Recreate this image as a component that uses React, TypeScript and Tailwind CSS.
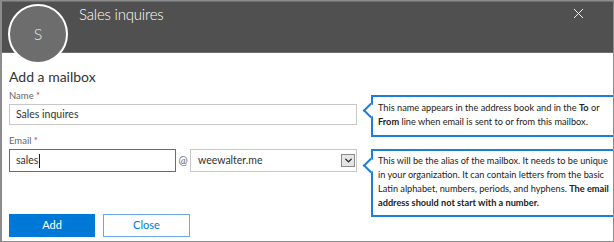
import { ChevronDown, X } from "lucide-react";

const font = { fontFamily: 'Lato, "Open Sans", Arial, sans-serif' };

function Callout({ className, arrowTop, children }: { className: string; arrowTop: string; children: React.ReactNode }) {
  return (
    <div className={`relative border-2 border-[#1b7fd8] bg-white ${className}`}>
      {/* left pointer */}
      <span
        className={`absolute -left-[8px] ${arrowTop} h-[11px] w-[11px] rotate-45 border-b-2 border-l-2 border-[#1b7fd8] bg-white`}
      />
      <div className="relative whitespace-nowrap text-[9.2px] leading-[14px] text-[#222]">{children}</div>
    </div>
  );
}

export default function App() {
  return (
    <div
      className="relative h-[242px] w-[614px] overflow-hidden border border-l-2 border-[#8c8c8c] bg-white"
      style={font}
    >
      {/* Header */}
      <div className="flex h-[52px] items-start justify-between border-t border-b border-[#6f6f6f] bg-[#505050] pl-[77px] pr-[26px]">
        <h1 className="mt-[2px] text-[15px] font-light leading-[20px] tracking-[-0.2px] text-white">Sales inquires</h1>
        <X className="mt-[3px] h-[17px] w-[17px] text-white" strokeWidth={1.3} />
      </div>

      {/* Avatar */}
      <div className="absolute left-[6px] top-[3px] flex h-[60px] w-[60px] items-center justify-center rounded-full border-2 border-white bg-[#6d6d6d]">
        <span className="text-[16px] font-light text-[#e6e6e6]">S</span>
      </div>

      {/* Body */}
      <div className="flex">
        <div className="flex w-[355px] flex-col pl-[7px] pt-[14px]">
          <h2 className="text-[14px] leading-[20px] text-[#333]">Add a mailbox</h2>

          <label className="mt-[2px] text-[9.5px] leading-[13px] text-[#666]">
            Name <span className="text-[#d13438]">*</span>
          </label>
          <div className="mt-[2px] flex h-[21px] items-center border border-[#c8c8c8] px-[6px] text-[10.5px] text-[#333]">
            Sales inquires
          </div>

          <label className="mt-[9px] text-[9.5px] leading-[13px] text-[#666]">
            Email <span className="text-[#d13438]">*</span>
          </label>
          <div className="mt-[2px] flex h-[23px] items-center">
            <div className="flex h-full w-[167px] items-center border border-[#1b7fd8] px-[6px] text-[10.5px] text-[#333]">
              sales<span className="ml-[1px] h-[14px] w-px bg-[#222]" />
            </div>
            <span className="w-[14px] text-center text-[11px] text-[#666]">@</span>
            <div className="flex h-full flex-1 items-center justify-between border border-[#c8c8c8] pl-[7px] pr-[1px] text-[10.5px] text-[#333]">
              weewalter.me
              <span className="flex h-[13px] w-[14px] items-center justify-center border border-[#8a8a8a] bg-[#e6e6e6]">
                <ChevronDown className="h-[11px] w-[11px] text-[#222]" strokeWidth={3} />
              </span>
            </div>
          </div>

          <div className="mt-[42px] flex gap-[8px]">
            <button className="h-[23px] w-[86px] bg-[#0078d7] text-[11px] text-white">Add</button>
            <button className="h-[23px] w-[87px] border border-[#6aa9e3] bg-white text-[11px] text-[#0078d7]">
              Close
            </button>
          </div>
        </div>

        <div className="flex flex-1 flex-col pl-[14px] pt-[42px]">
          <Callout className="h-[42px] -mr-[2px] pl-[5px] pt-[4px]" arrowTop="top-[8px]">
            This name appears in the address book and in the <b>To</b> or
            <br />
            <b>From</b> line when email is sent to or from this mailbox.
          </Callout>
          <Callout className="mt-[12px] h-[68px] -mr-[2px] pl-[5px] pt-[3px]" arrowTop="top-[9px]">
            This will be the alias of the mailbox. It needs to be unique
            <br />
            in your organization. It can contain letters from the basic
            <br />
            Latin alphabet, numbers, periods, and hyphens. <b>The email</b>
            <br />
            <b>address should not start with a number.</b>
          </Callout>
        </div>
      </div>
    </div>
  );
}
